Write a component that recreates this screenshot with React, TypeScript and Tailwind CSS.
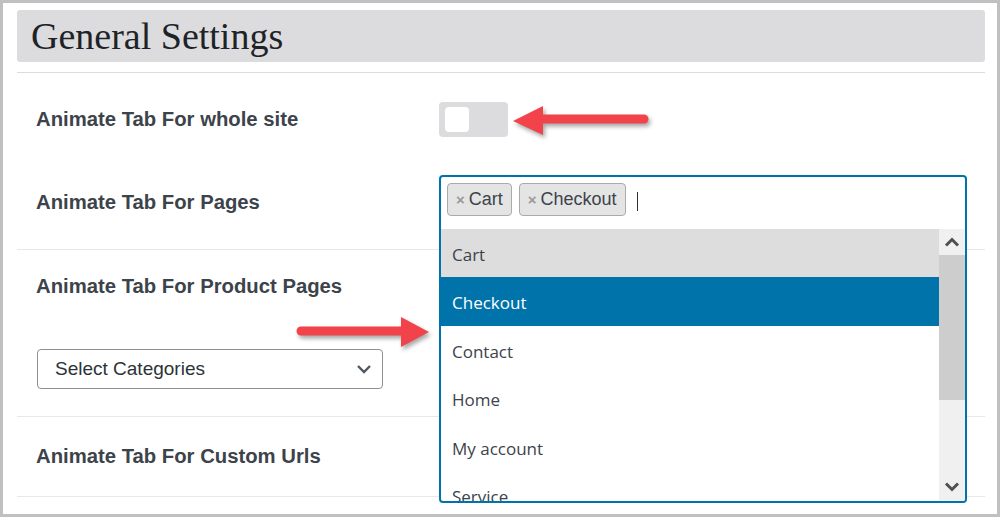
import React from 'react';

const sans = { fontFamily: '"Liberation Sans", Arial, sans-serif' };

function Tag({ label }: { label: string }) {
  return (
    <span className="flex h-[33px] items-center rounded-[4px] border border-[#aaaaaa] bg-[#e4e4e4] pl-[8px] pr-[8px] text-[18px] text-[#3c434a]">
      <span className="mr-[4px] text-[15px] font-bold leading-none text-[#999999]">×</span>
      {label}
    </span>
  );
}

function Chevron({ up }: { up?: boolean }) {
  return (
    <svg width="16" height="10" viewBox="0 0 16 10" className={up ? '' : 'rotate-180'}>
      <path d="M2 8.5 L8 2.5 L14 8.5" fill="none" stroke="#505050" strokeWidth="3" />
    </svg>
  );
}

function MultiSelect() {
  const options = ['Cart', 'Checkout', 'Contact', 'Home', 'My account', 'Service'];
  return (
    <div className="absolute left-0 top-0 z-10 flex h-[328px] w-[528px] flex-col overflow-hidden rounded-[4px] border-2 border-[#0073aa] bg-white font-normal">
      <div className="flex h-[52px] shrink-0 items-start gap-[7px] pl-[6px] pt-[6px]" style={sans}>
        <Tag label="Cart" />
        <Tag label="Checkout" />
        <span className="ml-[4px] mt-[9px] h-[19px] w-px bg-[#2c3338]" />
      </div>
      <div className="flex min-h-0 flex-1">
        <ul className="flex-1 overflow-hidden" style={{ fontFamily: '"Open Sans", "Noto Sans", sans-serif' }}>
          {options.map((o) => (
            <li
              key={o}
              className={`flex h-[48.4px] items-center pl-[11px] pt-[3px] text-[17px] ${
                o === 'Cart'
                  ? 'bg-[#dddddd] text-[#3c434a]'
                  : o === 'Checkout'
                  ? 'bg-[#0073aa] text-white'
                  : 'text-[#3c434a]'
              }`}
            >
              {o}
            </li>
          ))}
        </ul>
        <div className="flex w-[26px] flex-col bg-[#f0f0f0]">
          <div className="flex h-[26px] items-center justify-center">
            <Chevron up />
          </div>
          <div className="h-[145px] bg-[#cdcdcd]" />
          <div className="flex-1" />
          <div className="flex h-[26px] items-center justify-center pb-[2px]">
            <Chevron />
          </div>
        </div>
      </div>
    </div>
  );
}

function Arrow({ dir }: { dir: 'left' | 'right' }) {
  if (dir === 'left') {
    return (
      <svg width="150" height="42" viewBox="0 0 150 42" className="drop-shadow-[2px_3px_2px_rgba(0,0,0,0.35)]">
        <line x1="38" y1="19" x2="139" y2="19" stroke="#f2434b" strokeWidth="9" strokeLinecap="round" />
        <polygon points="8,21 38,6 38,35" fill="#f2434b" />
      </svg>
    );
  }
  return (
    <svg width="150" height="44" viewBox="0 0 150 44" className="drop-shadow-[2px_3px_2px_rgba(0,0,0,0.35)]">
      <line x1="12" y1="21" x2="114" y2="21" stroke="#f2434b" strokeWidth="9" strokeLinecap="round" />
      <polygon points="140,22 112,7 112,37" fill="#f2434b" />
    </svg>
  );
}

export default function App() {
  return (
    <div className="relative h-[517px] w-[1000px] overflow-hidden border-[3px] border-[#c0c0c0] bg-white pl-[14px] pr-[12px] pt-[7px]">
      <div className="flex h-[52px] items-center rounded-[3px] bg-[#dcdcde] pl-[14px]">
        <h1
          className="text-[38px] leading-none text-[#1d2327]"
          style={{ fontFamily: '"Liberation Serif", "Times New Roman", serif' }}
        >
          General Settings
        </h1>
      </div>
      <div className="mt-[10px] h-px bg-[#dcdcde]" />

      <div className="text-[20.3px] font-bold text-[#3c434a]" style={sans}>
        <div className="grid grid-cols-[403px_1fr] gap-y-[38px] pb-[20px] pl-[19px] pt-[29px]">
          <div className="flex h-[35px] items-center">Animate Tab For whole site</div>
          <div className="flex h-[35px] items-center">
            <button className="flex h-[35px] w-[69px] items-center rounded-[4px] bg-[#dcdcde] pl-[6px]">
              <span className="h-[25px] w-[24px] rounded-[4px] bg-white" />
            </button>
          </div>
          <div className="flex h-[54px] items-center">Animate Tab For Pages</div>
          <div className="relative h-[54px]">
            <MultiSelect />
          </div>
        </div>
        <div className="h-px bg-[#e8e8e8]" />

        <div className="pb-[27px] pl-[19px] pt-[24px]">
          <div className="leading-[24px]">Animate Tab For Product Pages</div>
          <div className="ml-px mt-[51px] flex h-[40px] w-[346px] items-center justify-between rounded-[4px] border border-[#8c8f94] pl-[17px] pr-[10px] text-[19px] font-normal text-[#2c3338]">
            Select Categories
            <svg width="16" height="10" viewBox="0 0 16 10">
              <path d="M2 2 L8 8 L14 2" fill="none" stroke="#50575e" strokeWidth="2.4" />
            </svg>
          </div>
        </div>
        <div className="h-px bg-[#e8e8e8]" />

        <div className="pb-[28px] pl-[19px] pt-[27px]">
          <div className="leading-[24px]">Animate Tab For Custom Urls</div>
        </div>
        <div className="h-px bg-[#e8e8e8]" />
      </div>

      <div className="absolute left-[502px] top-[97px] z-20">
        <Arrow dir="left" />
      </div>
      <div className="absolute left-[286px] top-[307px] z-20">
        <Arrow dir="right" />
      </div>
    </div>
  );
}
